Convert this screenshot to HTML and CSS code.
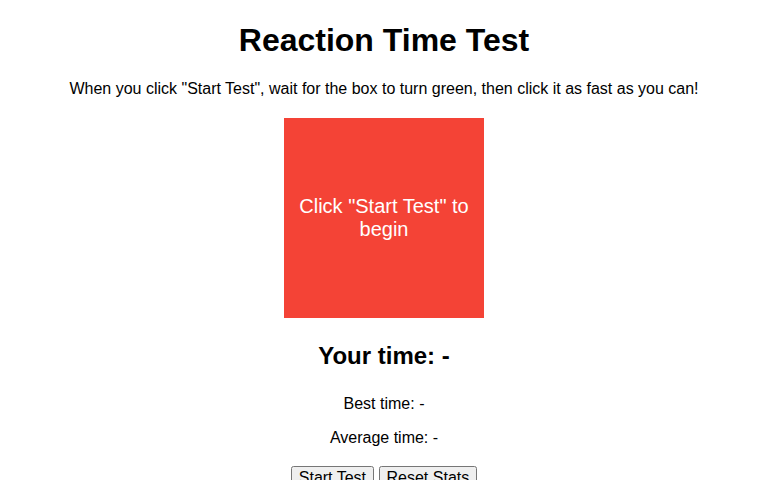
FILE: index.html
```html
<!DOCTYPE html>
<html>
<head>
<meta charset="utf-8">
<title>Reaction Time Test</title>
<link rel="stylesheet" href="styles.css">
</head>
<body>
<h1>Reaction Time Test</h1>
<p>When you click "Start Test", wait for the box to turn green, then click it as fast as you can!</p>
<div class="box">Click "Start Test" to begin</div>
<h2>Your time: -</h2>
<p>Best time: -</p>
<p>Average time: -</p>
<div class="controls">
<button class="btn">Start Test</button>
<button class="btn">Reset Stats</button>
</div>
</body>
</html>
```
FILE: styles.css
```css
body {
  font-family: "Liberation Sans", Arial, sans-serif;
  text-align: center;
  margin: 8px;
  color: #000;
  background: #fff;
}
h1 {
  font-size: 32px;
  margin: 14px 0 21px;
}
p {
  font-size: 16px;
  margin: 16px 0;
}
.box {
  width: 200px;
  height: 200px;
  margin: 20px auto;
  background: #f44336;
  color: #fff;
  font-size: 20px;
  display: flex;
  align-items: center;
  justify-content: center;
  padding: 0 10px;
  box-sizing: border-box;
}
h2 {
  font-size: 24px;
  margin: 24px 0 25px;
}
.controls {
  margin-top: 19px;
}
.btn {
  font-family: "Liberation Sans", Arial, sans-serif;
  font-size: 16px;
}
```
